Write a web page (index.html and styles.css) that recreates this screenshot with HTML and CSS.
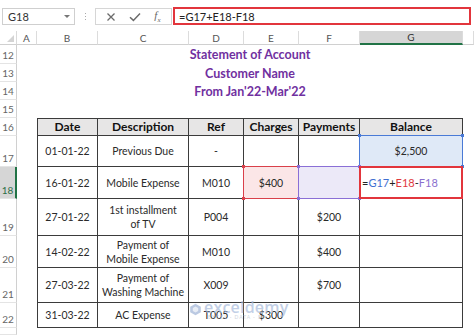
FILE: index.html
```html
<!DOCTYPE html>
<html lang="en">
<head>
  <meta charset="UTF-8">
  <meta name="viewport" content="width=device-width, initial-scale=1.0">
  <title>Statement of Account</title>
  <link rel="stylesheet" href="styles.css">
</head>
<body>
  <div class="formula-bar">
    <div class="name-box">G18<span class="caret"></span></div>
    <div class="grip"><span></span><span></span><span></span></div>
    <div class="fx-tools">
      <svg class="tool" width="10" height="10" viewBox="0 0 10 10"><path d="M1.5 1.5 L8.5 8.5 M8.5 1.5 L1.5 8.5" stroke="#6b6b6b" stroke-width="1.3" fill="none"/></svg>
      <svg class="tool" width="12" height="10" viewBox="0 0 12 10"><path d="M1 5.2 L4.4 8.4 L11 1.4" stroke="#6b6b6b" stroke-width="1.5" fill="none"/></svg>
      <span class="fx">f<sub>x</sub></span>
    </div>
    <div class="formula-input">=G17+E18-F18</div>
  </div>

  <div class="sheet">
    <div class="corner"></div>
    <div class="col-hd">A</div>
    <div class="col-hd">B</div>
    <div class="col-hd">C</div>
    <div class="col-hd">D</div>
    <div class="col-hd">E</div>
    <div class="col-hd">F</div>
    <div class="col-hd selected">G</div>
    <div class="col-hd"></div>

    <div class="row-hd">12</div>
    <div class="title">Statement of Account</div>
    <div class="row-hd">13</div>
    <div class="title">Customer Name</div>
    <div class="row-hd">14</div>
    <div class="title">From Jan'22-Mar'22</div>
    <div class="row-hd">15</div>

    <div class="row-hd">16</div>
    <div class="cell head first">Date</div>
    <div class="cell head">Description</div>
    <div class="cell head">Ref</div>
    <div class="cell head">Charges</div>
    <div class="cell head">Payments</div>
    <div class="cell head">Balance</div>

    <div class="row-hd">17</div>
    <div class="cell first">01-01-22</div>
    <div class="cell">Previous Due</div>
    <div class="cell">-</div>
    <div class="cell"></div>
    <div class="cell"></div>
    <div class="cell ref-blue">$2,500<span class="frame frame-blue"></span></div>

    <div class="row-hd selected">18</div>
    <div class="cell first">16-01-22</div>
    <div class="cell">Mobile Expense</div>
    <div class="cell">M010</div>
    <div class="cell ref-red">$400<span class="frame frame-red"></span></div>
    <div class="cell ref-purple"><span class="frame frame-purple"></span></div>
    <div class="cell formula"><span class="op">=</span><span class="g">G17</span><span class="op">+</span><span class="e">E18</span><span class="op">-</span><span class="f">F18</span><span class="frame frame-active"></span></div>

    <div class="row-hd">19</div>
    <div class="cell first">27-01-22</div>
    <div class="cell">1st installment<br>of TV</div>
    <div class="cell">P004</div>
    <div class="cell"></div>
    <div class="cell">$200</div>
    <div class="cell"></div>

    <div class="row-hd">20</div>
    <div class="cell first">14-02-22</div>
    <div class="cell">Payment of<br>Mobile Expense</div>
    <div class="cell">M010</div>
    <div class="cell"></div>
    <div class="cell">$400</div>
    <div class="cell"></div>

    <div class="row-hd">21</div>
    <div class="cell first">27-03-22</div>
    <div class="cell">Payment of<br>Washing Machine</div>
    <div class="cell">X009</div>
    <div class="cell"></div>
    <div class="cell">$700</div>
    <div class="cell"></div>

    <div class="row-hd">22</div>
    <div class="cell first">31-03-22</div>
    <div class="cell">AC Expense</div>
    <div class="cell">T005</div>
    <div class="cell">$300</div>
    <div class="cell"></div>
    <div class="cell"></div>

    <div class="row-hd"></div>
  </div>

  <div class="watermark">
    <svg width="13" height="13" viewBox="0 0 13 13"><path d="M6.5 0.8 L11.8 3.8 L11.8 9.2 L6.5 12.2 L1.2 9.2 L1.2 3.8 Z" fill="#9fb3d6"/><path d="M6.5 3.5 L9.2 5 L9.2 8 L6.5 9.5 L3.8 8 L3.8 5 Z" fill="#dfe6f2"/></svg>
    <div class="wm-text">
      <span class="wm-name">exceldemy</span>
      <span class="wm-tag">EXCEL · DATA · BI</span>
    </div>
  </div>
</body>
</html>
```

FILE: styles.css
```css
body {
  margin: 0;
  width: 474px;
  height: 335px;
  overflow: hidden;
  position: relative;
  background: #fff;
  font-family: Lato, "Liberation Sans", sans-serif;
  color: #262626;
}

/* formula bar */
.formula-bar {
  display: flex;
  align-items: flex-start;
  height: 31px;
  box-sizing: border-box;
  padding: 8px 3px 0 2px;
}

.name-box {
  width: 73px;
  height: 17px;
  box-sizing: border-box;
  border: 1px solid #cfcfcf;
  display: flex;
  align-items: center;
  justify-content: space-between;
  padding: 0 4px 0 5px;
  font-size: 11px;
  color: #333;
}

.caret {
  width: 0;
  height: 0;
  border-left: 3px solid transparent;
  border-right: 3px solid transparent;
  border-top: 3px solid #777;
}

.grip {
  width: 20px;
  height: 17px;
  display: flex;
  flex-direction: column;
  align-items: center;
  justify-content: center;
  gap: 2px;
}

.grip span {
  width: 1px;
  height: 1px;
  background: #aaa;
}

.fx-tools {
  width: 77px;
  height: 17px;
  box-sizing: border-box;
  border: 1px solid #d6d6d6;
  display: flex;
  align-items: center;
  justify-content: space-around;
  padding: 0 4px;
}

.fx {
  font-family: "Liberation Serif", serif;
  font-style: italic;
  font-size: 11px;
  color: #666;
}

.fx sub {
  font-size: 7px;
}

.formula-input {
  flex: 1;
  height: 18px;
  margin-left: 1px;
  margin-top: -1px;
  box-sizing: border-box;
  border: 2px solid #e2353c;
  display: flex;
  align-items: center;
  padding-left: 4px;
  font-size: 11px;
  color: #222;
}

/* worksheet */
.sheet {
  display: grid;
  grid-template-columns: 17px 20px 61px 91px 55px 55px 61px 103px 1fr;
  grid-template-rows: 14px 19px 18px 18px 18px 18px 31px 32px 37px 32px 35px 25px 1fr;
  height: 304px;
}

.corner {
  border-right: 1px solid #dadada;
  border-bottom: 1px solid #d0d0d0;
  position: relative;
}

.corner::after {
  content: "";
  position: absolute;
  right: 2px;
  bottom: 2px;
  border-left: 7px solid transparent;
  border-bottom: 7px solid #d4d4d4;
}

.col-hd {
  border-right: 1px solid #dcdcdc;
  border-bottom: 1px solid #d0d0d0;
  font-size: 10px;
  color: #555;
  display: flex;
  align-items: center;
  justify-content: center;
}

.col-hd.selected {
  background: #d6d6d6;
  border-bottom: 2px solid #217346;
  color: #333;
}

.row-hd {
  grid-column: 1;
  border-right: 1px solid #d0d0d0;
  border-bottom: 1px solid #e4e4e4;
  font-size: 10px;
  color: #666;
  display: flex;
  align-items: flex-end;
  justify-content: center;
  padding-bottom: 2px;
  box-sizing: border-box;
}

.row-hd.selected {
  background: #d6d6d6;
  border-right: 2px solid #217346;
  color: #2f6f47;
}

.title {
  grid-column: 3 / 9;
  display: flex;
  align-items: center;
  justify-content: center;
  font-weight: 700;
  font-size: 12.5px;
  color: #7030a0;
}

.cell {
  position: relative;
  border-right: 1px solid #3b3b3b;
  border-bottom: 1px solid #3b3b3b;
  display: flex;
  align-items: center;
  justify-content: center;
  text-align: center;
  font-size: 10.5px;
  line-height: 14px;
  color: #2a2a2a;
}

.cell.first {
  grid-column-start: 3;
  border-left: 1px solid #3b3b3b;
}

.cell.head {
  border-top: 1px solid #3b3b3b;
  background: #e7e6e6;
  font-weight: 700;
  font-size: 12px;
  color: #111;
}

.ref-blue {
  background: #dfe9f7;
}

.ref-red {
  background: #fbe6e7;
}

.ref-purple {
  background: #ece9f8;
}

.formula {
  justify-content: flex-start;
  padding-left: 2px;
  font-size: 11px;
}

.formula .op { color: #222; }
.formula .g { color: #3f6fd1; }
.formula .e { color: #df3a3f; }
.formula .f { color: #8a6fce; }

/* reference frames drawn over the cell borders */
.frame {
  position: absolute;
  top: -1px;
  left: -1px;
  right: -1px;
  bottom: -1px;
  border: 1px solid;
  z-index: 2;
}

.frame::before,
.frame::after {
  content: "";
  position: absolute;
  width: 3px;
  height: 3px;
  background: currentColor;
  top: -2px;
}

.frame::before {
  left: -2px;
  box-shadow: 0 var(--h) 0 currentColor;
}

.frame::after {
  right: -2px;
  box-shadow: 0 var(--h) 0 currentColor;
}

.frame-blue {
  color: #4a7ad6;
  --h: 31px;
}

.frame-red {
  color: #d9404a;
  --h: 32px;
}

.frame-purple {
  color: #8a6fd6;
  --h: 32px;
}

.frame-active {
  color: #e2353c;
  border-width: 2px;
  z-index: 3;
}

.frame-active::before,
.frame-active::after {
  display: none;
}

/* logo watermark */
.watermark {
  position: absolute;
  left: 189px;
  top: 299px;
  display: flex;
  align-items: center;
  gap: 2px;
  opacity: 0.7;
  z-index: 4;
}

.wm-text {
  display: flex;
  flex-direction: column;
  line-height: 1;
}

.wm-name {
  font-family: "Open Sans", sans-serif;
  font-size: 16px;
  font-weight: 600;
  color: #a9bcdc;
  letter-spacing: 0.2px;
}

.wm-tag {
  font-size: 5px;
  color: #b9c3d2;
  letter-spacing: 1px;
  padding-left: 4px;
}
```
